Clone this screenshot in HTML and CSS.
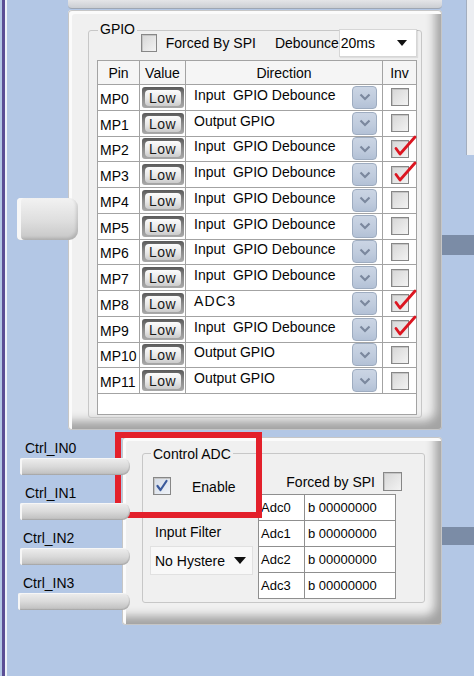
FILE: index.html
```html
<!DOCTYPE html>
<html>
<head>
<meta charset="utf-8">
<title>GPIO / Control ADC</title>
<link rel="stylesheet" href="styles.css">
</head>
<body>
<div class="page">
  <div class="upper">
    <div class="lcol"><div class="bigbtn"></div></div>
    <div class="ccol">
      <div class="topstrip"></div>
      <div class="panel main">
        <div class="group gpio">
          <span class="legend">GPIO</span>
          <div class="toolbar">
            <span class="chk tchk"></span>
            <span class="forced">Forced By SPI</span>
            <span class="deb">Debounce</span>
            <span class="select sel20"><span class="seltext">20ms</span><span class="tri"></span></span>
          </div>
          <div class="tablebox">
            <div class="tbl">
              <div class="th">Pin</div><div class="th">Value</div><div class="th">Direction</div><div class="th">Inv</div>

              <div class="pin">MP0</div><div class="val"><span class="low"><span>Low</span></span></div><div class="dir"><span class="dt">Input  GPIO Debounce</span><span class="arr"><svg width="12" height="8" viewBox="0 0 12 8"><polyline points="1.5,1.5 6,6 10.5,1.5"/></svg></span></div><div class="inv"><span class="chk"></span></div>

              <div class="pin">MP1</div><div class="val"><span class="low"><span>Low</span></span></div><div class="dir"><span class="dt">Output GPIO</span><span class="arr"><svg width="12" height="8" viewBox="0 0 12 8"><polyline points="1.5,1.5 6,6 10.5,1.5"/></svg></span></div><div class="inv"><span class="chk"></span></div>

              <div class="pin">MP2</div><div class="val"><span class="low"><span>Low</span></span></div><div class="dir"><span class="dt">Input  GPIO Debounce</span><span class="arr"><svg width="12" height="8" viewBox="0 0 12 8"><polyline points="1.5,1.5 6,6 10.5,1.5"/></svg></span></div><div class="inv"><span class="chk on"><svg class="rc" width="26" height="24" viewBox="0 0 26 24"><path d="M4 13.5 L8 19 L23 2"/></svg></span></div>

              <div class="pin">MP3</div><div class="val"><span class="low"><span>Low</span></span></div><div class="dir"><span class="dt">Input  GPIO Debounce</span><span class="arr"><svg width="12" height="8" viewBox="0 0 12 8"><polyline points="1.5,1.5 6,6 10.5,1.5"/></svg></span></div><div class="inv"><span class="chk on"><svg class="rc" width="26" height="24" viewBox="0 0 26 24"><path d="M4 13.5 L8 19 L23 2"/></svg></span></div>

              <div class="pin">MP4</div><div class="val"><span class="low"><span>Low</span></span></div><div class="dir"><span class="dt">Input  GPIO Debounce</span><span class="arr"><svg width="12" height="8" viewBox="0 0 12 8"><polyline points="1.5,1.5 6,6 10.5,1.5"/></svg></span></div><div class="inv"><span class="chk"></span></div>

              <div class="pin">MP5</div><div class="val"><span class="low"><span>Low</span></span></div><div class="dir"><span class="dt">Input  GPIO Debounce</span><span class="arr"><svg width="12" height="8" viewBox="0 0 12 8"><polyline points="1.5,1.5 6,6 10.5,1.5"/></svg></span></div><div class="inv"><span class="chk"></span></div>

              <div class="pin">MP6</div><div class="val"><span class="low"><span>Low</span></span></div><div class="dir"><span class="dt">Input  GPIO Debounce</span><span class="arr"><svg width="12" height="8" viewBox="0 0 12 8"><polyline points="1.5,1.5 6,6 10.5,1.5"/></svg></span></div><div class="inv"><span class="chk"></span></div>

              <div class="pin">MP7</div><div class="val"><span class="low"><span>Low</span></span></div><div class="dir"><span class="dt">Input  GPIO Debounce</span><span class="arr"><svg width="12" height="8" viewBox="0 0 12 8"><polyline points="1.5,1.5 6,6 10.5,1.5"/></svg></span></div><div class="inv"><span class="chk"></span></div>

              <div class="pin">MP8</div><div class="val"><span class="low"><span>Low</span></span></div><div class="dir"><span class="dt adc">ADC3</span><span class="arr"><svg width="12" height="8" viewBox="0 0 12 8"><polyline points="1.5,1.5 6,6 10.5,1.5"/></svg></span></div><div class="inv"><span class="chk on"><svg class="rc" width="26" height="24" viewBox="0 0 26 24"><path d="M4 13.5 L8 19 L23 2"/></svg></span></div>

              <div class="pin">MP9</div><div class="val"><span class="low"><span>Low</span></span></div><div class="dir"><span class="dt">Input  GPIO Debounce</span><span class="arr"><svg width="12" height="8" viewBox="0 0 12 8"><polyline points="1.5,1.5 6,6 10.5,1.5"/></svg></span></div><div class="inv"><span class="chk on"><svg class="rc" width="26" height="24" viewBox="0 0 26 24"><path d="M4 13.5 L8 19 L23 2"/></svg></span></div>

              <div class="pin">MP10</div><div class="val"><span class="low"><span>Low</span></span></div><div class="dir"><span class="dt">Output GPIO</span><span class="arr"><svg width="12" height="8" viewBox="0 0 12 8"><polyline points="1.5,1.5 6,6 10.5,1.5"/></svg></span></div><div class="inv"><span class="chk"></span></div>

              <div class="pin">MP11</div><div class="val"><span class="low"><span>Low</span></span></div><div class="dir"><span class="dt">Output GPIO</span><span class="arr"><svg width="12" height="8" viewBox="0 0 12 8"><polyline points="1.5,1.5 6,6 10.5,1.5"/></svg></span></div><div class="inv"><span class="chk"></span></div>
            </div>
          </div>
        </div>
      </div>
    </div>
    <div class="rcol">
      <div class="lightrect"></div>
      <div class="darkbar"></div>
    </div>
  </div>

  <div class="lower">
    <div class="ctrls">
      <div class="clabel">Ctrl_IN0</div><div class="bar"></div>
      <div class="clabel">Ctrl_IN1</div><div class="bar"></div>
      <div class="clabel l2">Ctrl_IN2</div><div class="bar"></div>
      <div class="clabel l2">Ctrl_IN3</div><div class="bar b3"></div>
    </div>
    <div class="panel adcpanel">
      <div class="group adcgroup">
        <span class="legend">Control ADC</span>
        <div class="adcleft">
          <div class="enrow">
            <span class="chk bchk"><svg width="16" height="16" viewBox="0 0 16 16"><path d="M3.5 8 L6.5 12 L12.5 3"/></svg></span>
            <span class="enable">Enable</span>
          </div>
          <div class="ifl">Input Filter</div>
          <div class="select selhy"><span class="seltext">No Hystere</span><span class="tri big"></span></div>
        </div>
        <div class="adcright">
          <div class="frow"><span>Forced by SPI</span><span class="chk fchk"></span></div>
          <div class="atbl">
            <div>Adc0</div><div class="v">b 00000000</div>
            <div>Adc1</div><div class="v">b 00000000</div>
            <div>Adc2</div><div class="v">b 00000000</div>
            <div>Adc3</div><div class="v">b 00000000</div>
          </div>
        </div>
      </div>
    </div>
    <div class="rcol">
      <div class="darkbar low2"></div>
    </div>
  </div>

  <div class="redbox"></div>
</div>
</body>
</html>
```

FILE: styles.css
```css
* { box-sizing: border-box; }
html, body { margin: 0; padding: 0; }
body {
  font-family: "Liberation Sans", Arial, sans-serif;
  font-size: 14px;
  color: #050505;
  background: #b3c7e5;
}
.page {
  position: relative;
  width: 474px;
  height: 676px;
  overflow: hidden;
  background: linear-gradient(to right, #b3c7e5 0 2px, #5b4e95 2px 5px, #eef2f8 5px 7px, #b3c7e5 7px);
}

/* ---------- upper ---------- */
.upper { display: flex; height: 437px; }
.lcol { width: 68px; flex: none; }
.bigbtn {
  position: relative;
  z-index: 2;
  margin: 198px 0 0 17px;
  width: 61px;
  height: 42px;
  border-radius: 4px 9px 9px 4px;
  background: linear-gradient(#f2f2f2, #dedede 55%, #c6c6c6);
  box-shadow: inset 4px 0 0 #f7f7f7, inset -2px -2px 3px rgba(0,0,0,.12);
}
.ccol { width: 374px; flex: none; display: flex; flex-direction: column; }
.topstrip {
  height: 9px;
  background: linear-gradient(#e4e5e8, #cbced3);
  border-bottom: 1px solid #9ea6b3;
  border-radius: 0 0 4px 4px;
}
.rcol { flex: 1; }
.lightrect {
  margin-left: 24px;
  height: 155px;
  background: #eceef2;
  border-left: 1px solid #a3aebf;
}
.darkbar { height: 20px; margin-top: 80px; background: #7b8ca6; }
.darkbar.low2 { margin-top: 90px; height: 18px; }

/* ---------- bevel panels ---------- */
.panel {
  position: relative;
  background: #f0f0f0;
  border-radius: 4px;
  box-shadow:
    inset 0 0 0 1px #c6c6c6,
    inset 3px 3px 0 1px #fbfbfb,
    inset -14px -16px 10px -7px rgba(0,0,0,.32);
}
.main { margin-top: 1px; height: 420px; padding: 20px 0 0 20px; }
.group {
  position: relative;
  border: 1px solid #c7c7c7;
  border-radius: 3px;
}
.legend {
  position: absolute;
  left: 9px;
  padding: 0 2px;
  line-height: 16px;
  background: #f0f0f0;
  white-space: nowrap;
}
.gpio { width: 334px; height: 388px; padding: 0 4px 0 8px; }
.gpio .legend { top: -10px; }

.toolbar { display: flex; align-items: center; height: 28px; margin-top: -2px; }
.chk {
  position: relative;
  display: inline-block;
  width: 18px;
  height: 18px;
  border: 1px solid #878787;
  background: linear-gradient(135deg, #d6d6d6, #f3f3f3);
  box-shadow: inset 1px 1px 0 #c4c4c4;
}
.tchk { width: 16px; height: 18px; margin-left: 44px; }
.forced { margin-left: 9px; white-space: nowrap; }
.deb { margin-left: 19px; }
.select {
  display: flex;
  align-items: center;
  justify-content: space-between;
  background: #fff;
  border: 1px solid #d6d6d6;
}
.sel20 { width: 80px; height: 28px; padding: 0 9px 0 1px; box-shadow: 1px 1px 1px rgba(0,0,0,.08); }
.tri {
  width: 0; height: 0;
  border-left: 5px solid transparent;
  border-right: 5px solid transparent;
  border-top: 6px solid #111;
}
.tri.big { border-left-width: 6px; border-right-width: 6px; border-top-width: 7px; }

.tablebox {
  margin-top: 3px;
  width: 320px;
  height: 355px;
  border: 1px solid #a3a3a3;
  background: #fff;
}
.tbl {
  display: grid;
  grid-template-columns: 42px 46px 197px 33px;
  grid-template-rows: 24px repeat(12, 25.75px);
}
.tbl > div {
  display: flex;
  align-items: center;
  border-right: 1px solid #a3a3a3;
  border-bottom: 1px solid #a3a3a3;
  min-width: 0;
}
.tbl > div:nth-child(4n) { border-right: none; }
.th { justify-content: center; background: #f5f5f5; }
.pin { padding: 3px 0 0 2px; white-space: nowrap; }
.val { justify-content: center; }
.low {
  display: block;
  width: 42px;
  height: 21px;
  padding: 3px 3px 2px;
  border-radius: 3px;
  background: linear-gradient(#5a5a5a, #8a8a8a 50%, #a9a9a9);
}
.low span {
  display: block;
  height: 16px;
  border-radius: 4px;
  background: linear-gradient(#fcfcfc, #e8e8e8 55%, #cbcbcb);
  text-align: center;
  font-size: 14px;
  line-height: 17px;
  letter-spacing: .5px;
  color: #1a1a1a;
}
.dir { justify-content: space-between; padding: 0 5px 0 8px; }
.dt { white-space: pre; padding-bottom: 5px; }
.dt.adc { letter-spacing: 1.2px; }
.arr {
  display: flex;
  align-items: center;
  justify-content: center;
  width: 25px;
  height: 23px;
  border: 1px solid #9eacc0;
  border-radius: 4px;
  background: linear-gradient(#cbd5e4, #bfcbdd 60%, #b3c1d6);
}
.arr svg { fill: none; stroke: #7b889e; stroke-width: 2.2; }
.inv { justify-content: center; }
.rc {
  position: absolute;
  left: 0;
  top: -6px;
  overflow: visible;
  fill: none;
  stroke: #dc1621;
  stroke-width: 2.8;
  stroke-linecap: round;
  stroke-linejoin: round;
}

/* ---------- lower ---------- */
.lower { display: flex; height: 239px; }
.ctrls {
  position: relative;
  z-index: 2;
  width: 130px;
  flex: none;
  padding: 3px 0 0 20px;
}
.clabel { line-height: 16px; padding-left: 5px; white-space: nowrap; }
.clabel.l2 { padding-left: 3px; }
.bar {
  height: 17px;
  margin: 2px 0 10px;
  border-radius: 2px 8px 8px 2px;
  background: linear-gradient(#eeeeee, #dadada 50%, #bdbdbd);
  box-shadow: inset 2px 1px 0 #f6f6f6, inset -1px -1px 1px rgba(0,0,0,.12);
}
.bar.b3 { margin-left: -2px; }
.adcpanel { margin-left: -8px; width: 320px; height: 188px; padding: 16px 0 0 20px; }
.adcgroup { width: 283px; height: 150px; display: flex; }
.adcgroup .legend { top: -8px; left: 8px; }
.adcleft { width: 115px; flex: none; }
.enrow { display: flex; align-items: center; margin-top: 23px; height: 18px; }
.bchk { margin-left: 10px; background: linear-gradient(135deg, #d4dbe6, #eef2f8); }
.bchk svg {
  position: absolute; left: 0; top: 0;
  fill: none; stroke: #3b5a9c; stroke-width: 2.2;
  stroke-linecap: round; stroke-linejoin: round;
}
.enable { margin-left: 21px; padding-top: 1px; }
.ifl { margin: 29px 0 0 12px; line-height: 16px; }
.selhy {
  margin: 6px 0 0 7px;
  width: 103px;
  height: 29px;
  padding: 0 6px 0 4px;
  background: #f8f8f8;
  border-color: #e1e1e1;
}
.adcright { width: 144px; flex: none; }
.frow {
  display: flex;
  align-items: center;
  justify-content: flex-end;
  margin-top: 18px;
  height: 19px;
  white-space: nowrap;
}
.fchk { width: 19px; height: 19px; margin-left: 8px; }
.atbl {
  margin-top: 3px;
  width: 138px;
  display: grid;
  grid-template-columns: 46px 91px;
  grid-auto-rows: 26px;
  border-left: 1px solid #8f8f8f;
  border-top: 1px solid #8f8f8f;
  background: #fff;
  font-size: 13px;
}
.atbl > div {
  display: flex;
  align-items: center;
  padding-left: 2px;
  border-right: 1px solid #8f8f8f;
  border-bottom: 1px solid #8f8f8f;
  white-space: nowrap;
}
.atbl > .v { padding-left: 3px; }

/* annotation */
.redbox {
  position: absolute;
  left: 115px;
  top: 432px;
  width: 147px;
  height: 86px;
  border: 6px solid #e3202b;
}
```
